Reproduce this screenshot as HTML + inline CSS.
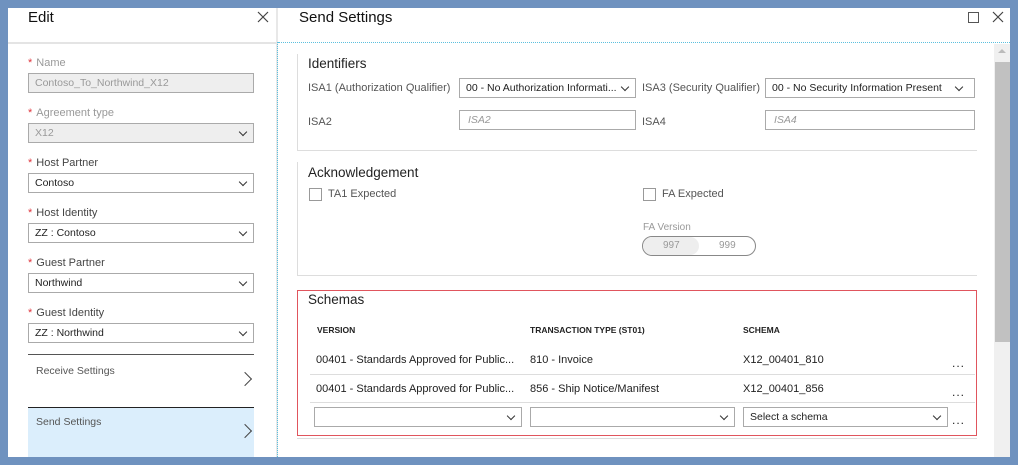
<!DOCTYPE html>
<html><head><style>
*{box-sizing:border-box;margin:0;padding:0}
body{width:1018px;height:465px;background:#6f92bf;position:relative;overflow:hidden;font-family:"Segoe UI","Liberation Sans",sans-serif;color:#333}
.a{position:absolute}
.lbl{font-size:11px;color:#444}
.lbl b{color:#e0343c;font-weight:normal;margin-right:4px}
.dis{color:#999}
.inp{position:absolute;height:20px;border:1px solid #aaa;background:#fff;font-size:10.5px;padding:3px 6px 0;color:#222;white-space:nowrap;overflow:hidden}
.chev{position:absolute;right:7px;top:5px;width:6px;height:6px;border-right:1.2px solid #333;border-bottom:1.2px solid #333;transform:rotate(45deg)}
.ph{font-style:italic;color:#999}
.cb{position:absolute;width:13px;height:13px;border:1px solid #999;background:#fff}
.hd{font-size:8.5px;font-weight:bold;color:#222}
.t{font-size:11px;color:#222;position:absolute;white-space:nowrap}
.dots{position:absolute;font-size:12px;letter-spacing:1px;color:#222}
.rarr{position:absolute;width:10px;height:10px;border-right:1.3px solid #444;border-top:1.3px solid #444;transform:rotate(45deg)}
</style></head><body>
<!-- Edit panel -->
<div class="a" style="left:8px;top:8px;width:268px;height:449px;background:#fff"></div>
<div class="a" style="left:8px;top:42px;width:268px;height:2px;background:#e4e4e4"></div>
<div class="a" style="left:28px;top:9px;font-size:15px;color:#111">Edit</div>
<svg class="a" style="left:257px;top:11px" width="12" height="12"><path d="M1 1L11 11M11 1L1 11" stroke="#444" stroke-width="1.2"/></svg>
<div class="a lbl dis" style="left:28px;top:57px"><b>*</b>Name</div>
<div class="inp" style="left:28px;top:73px;width:226px;background:#eee;color:#999">Contoso_To_Northwind_X12</div>
<div class="a lbl dis" style="left:28px;top:107px"><b>*</b>Agreement type</div>
<div class="inp" style="left:28px;top:123px;width:226px;background:#eee;color:#999">X12<span class="chev"></span></div>
<div class="a lbl" style="left:28px;top:157px"><b>*</b>Host Partner</div>
<div class="inp" style="left:28px;top:173px;width:226px">Contoso<span class="chev"></span></div>
<div class="a lbl" style="left:28px;top:207px"><b>*</b>Host Identity</div>
<div class="inp" style="left:28px;top:223px;width:226px">ZZ : Contoso<span class="chev"></span></div>
<div class="a lbl" style="left:28px;top:257px"><b>*</b>Guest Partner</div>
<div class="inp" style="left:28px;top:273px;width:226px">Northwind<span class="chev"></span></div>
<div class="a lbl" style="left:28px;top:307px"><b>*</b>Guest Identity</div>
<div class="inp" style="left:28px;top:323px;width:226px">ZZ : Northwind<span class="chev"></span></div>
<div class="a" style="left:28px;top:354px;width:226px;height:1px;background:#555"></div>
<div class="a" style="left:36px;top:365px;font-size:10.5px;color:#555">Receive Settings</div>
<div class="rarr" style="left:240px;top:374px"></div>
<div class="a" style="left:28px;top:407px;width:226px;height:50px;background:#dbeefc;border-top:1px solid #222"></div>
<div class="a" style="left:36px;top:416px;font-size:10.5px;color:#555">Send Settings</div>
<div class="rarr" style="left:240px;top:426px"></div>
<!-- separator -->
<div class="a" style="left:276px;top:8px;width:2px;height:449px;background:#e8e8e8"></div>
<!-- Send settings panel -->
<div class="a" style="left:278px;top:8px;width:732px;height:449px;background:#fff"></div>
<div class="a" style="left:277px;top:42px;width:0;height:415px;border-left:1px dotted #5bc0de"></div>
<div class="a" style="left:278px;top:42px;width:732px;border-top:1px dotted #5bc0de"></div>
<div class="a" style="left:299px;top:9px;font-size:15px;color:#111">Send Settings</div>
<div class="a" style="left:968px;top:12px;width:11px;height:11px;border:1px solid #555"></div>
<svg class="a" style="left:992px;top:11px" width="12" height="12"><path d="M1 1L11 11M11 1L1 11" stroke="#444" stroke-width="1.2"/></svg>
<!-- scrollbar -->
<div class="a" style="left:994px;top:44px;width:16px;height:413px;background:#f0f0f0"></div>
<div class="a" style="left:998px;top:49px;width:0;height:0;border-left:4px solid transparent;border-right:4px solid transparent;border-bottom:4px solid #bbb"></div>
<div class="a" style="left:995px;top:62px;width:15px;height:280px;background:#c1c1c1"></div>
<!-- Identifiers -->
<div class="a" style="left:297px;top:54px;width:680px;height:97px;border-left:1px solid #ddd;border-bottom:1px solid #ddd"></div>
<div class="a" style="left:308px;top:56px;font-size:13.5px;color:#222">Identifiers</div>
<div class="t" style="left:308px;top:82px;color:#555">ISA1 (Authorization Qualifier)</div>
<div class="inp" style="left:459px;top:78px;width:177px">00 - No Authorization Informati...<span class="chev"></span></div>
<div class="t" style="left:642px;top:82px;color:#555">ISA3 (Security Qualifier)</div>
<div class="inp" style="left:765px;top:78px;width:210px">00 - No Security Information Present<span class="chev" style="right:12px"></span></div>
<div class="t" style="left:308px;top:116px;color:#555">ISA2</div>
<div class="inp ph" style="left:459px;top:110px;width:177px;padding-left:8px">ISA2</div>
<div class="t" style="left:642px;top:116px;color:#555">ISA4</div>
<div class="inp ph" style="left:765px;top:110px;width:210px;padding-left:8px">ISA4</div>
<!-- Acknowledgement -->
<div class="a" style="left:297px;top:162px;width:680px;height:114px;border-left:1px solid #ddd;border-bottom:1px solid #ddd"></div>
<div class="a" style="left:308px;top:165px;font-size:13.5px;color:#222">Acknowledgement</div>
<div class="cb" style="left:309px;top:188px"></div>
<div class="t" style="left:328px;top:188px;color:#555">TA1 Expected</div>
<div class="cb" style="left:643px;top:188px"></div>
<div class="t" style="left:662px;top:188px;color:#555">FA Expected</div>
<div class="t" style="left:643px;top:222px;color:#999;font-size:10px">FA Version</div>
<div class="a" style="left:642px;top:236px;width:114px;height:20px;border:1px solid #888;border-radius:10px;overflow:hidden">
<div class="a" style="left:0;top:0;width:56px;height:18px;background:#eee;border-radius:9px"></div>
<div class="a" style="left:20px;top:3px;font-size:10px;color:#999">997</div>
<div class="a" style="left:76px;top:3px;font-size:10px;color:#999">999</div></div>
<!-- Schemas -->
<div class="a" style="left:297px;top:290px;width:680px;height:146px;border:1px solid #e0555d"></div>
<div class="a" style="left:308px;top:292px;font-size:13.5px;color:#222">Schemas</div>
<div class="a hd" style="left:317px;top:325px">VERSION</div>
<div class="a hd" style="left:530px;top:325px">TRANSACTION TYPE (ST01)</div>
<div class="a hd" style="left:743px;top:325px">SCHEMA</div>
<div class="t" style="left:316px;top:354px">00401 - Standards Approved for Public...</div>
<div class="t" style="left:530px;top:354px">810 - Invoice</div>
<div class="t" style="left:743px;top:354px">X12_00401_810</div>
<div class="dots" style="left:952px;top:356px">...</div>
<div class="a" style="left:310px;top:374px;width:665px;height:1px;background:#ddd"></div>
<div class="t" style="left:316px;top:383px">00401 - Standards Approved for Public...</div>
<div class="t" style="left:530px;top:383px">856 - Ship Notice/Manifest</div>
<div class="t" style="left:743px;top:383px">X12_00401_856</div>
<div class="dots" style="left:952px;top:385px">...</div>
<div class="a" style="left:310px;top:402px;width:665px;height:1px;background:#ddd"></div>
<div class="inp" style="left:314px;top:407px;width:208px"><span class="chev"></span></div>
<div class="inp" style="left:530px;top:407px;width:205px"><span class="chev"></span></div>
<div class="inp" style="left:743px;top:407px;width:205px">Select a schema<span class="chev"></span></div>
<div class="dots" style="left:952px;top:413px">...</div>
<div class="a" style="left:297px;top:438px;width:680px;height:1px;background:#ddd"></div>
</body></html>
